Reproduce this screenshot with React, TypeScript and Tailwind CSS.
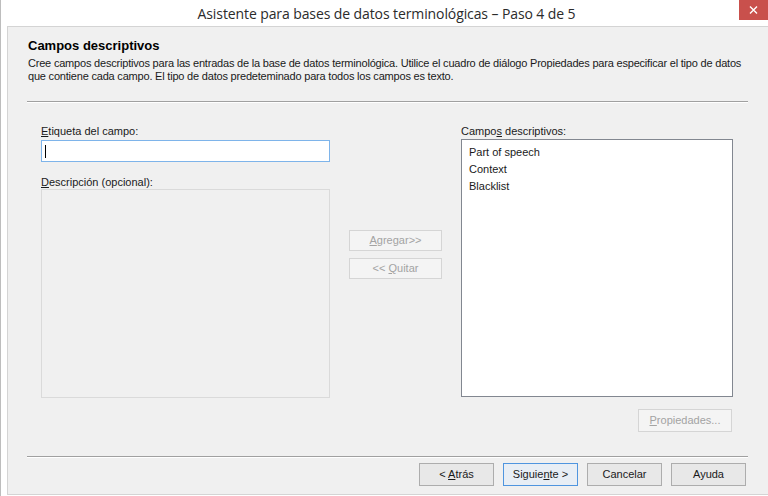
import React from 'react';

const ui = { fontFamily: '"Liberation Sans", Arial, sans-serif' };

function Btn({
  children,
  w = 'w-[75px]',
  h = 'h-[23px]',
  disabled = false,
  primary = false,
}: {
  children: React.ReactNode;
  w?: string;
  h?: string;
  disabled?: boolean;
  primary?: boolean;
}) {
  const tone = disabled
    ? 'border-[#d5d5d5] bg-[#f4f4f4] text-[#a3a3a3]'
    : primary
      ? 'border-[#4f95df] bg-[#e8eef5] text-[#1a1a1a]'
      : 'border-[#adadad] bg-[#e8e8e8] text-[#1a1a1a]';
  return (
    <div className={`${w} ${h} border flex items-center justify-center text-[11px] ${tone}`}>
      {children}
    </div>
  );
}

export default function App() {
  return (
    <div className="w-[768px] h-[496px] bg-white flex flex-col border-l border-[#bdbdbd] overflow-hidden" style={ui}>
      {/* title bar */}
      <div className="relative h-[26px] shrink-0 flex items-center justify-center">
        <span className="text-[14px] tracking-[-0.1px] text-[#2b2b2b] pl-[4px]" style={{ fontFamily: '"Open Sans", "Noto Sans", sans-serif' }}>
          Asistente para bases de datos terminológicas – Paso 4 de 5
        </span>
        <div className="absolute right-0 top-0 w-[29px] h-[20px] bg-[#c9504c] flex items-center justify-center">
          <svg width="9" height="8" viewBox="0 0 9 8">
            <path d="M1 0.5 L8 7.5 M8 0.5 L1 7.5" stroke="white" strokeWidth="1.4" />
          </svg>
        </div>
      </div>

      {/* client area */}
      <div className="flex-1 ml-[6px] mb-[1px] border-t border-l border-b border-[#d4d4d4] bg-[#f0f0f0] flex flex-col text-[#1a1a1a]">
        {/* header */}
        <div className="pl-[20px] pt-[11px]">
          <div className="text-[13px] font-bold leading-[16px] text-black">Campos descriptivos</div>
          <div className="mt-[3px] text-[11px] leading-[13px] tracking-[-0.2px]">
            Cree campos descriptivos para las entradas de la base de datos terminológica. Utilice el cuadro de diálogo Propiedades para especificar el tipo de datos
            <br />
            que contiene cada campo. El tipo de datos predeteminado para todos los campos es texto.
          </div>
        </div>
        <div className="ml-[19px] w-[721px] mt-[18px] border-t border-[#a0a0a0] border-b border-b-white" />

        {/* main */}
        <div className="flex h-[353px]">
          {/* left */}
          <div className="ml-[33px] w-[289px] flex flex-col">
            <div className="mt-[22px] text-[11px] leading-[13px]">
              <span className="underline">E</span>tiqueta del campo:
            </div>
            <div className="mt-[2px] h-[22px] bg-white border border-[#7eb4ea] flex items-center pl-[3px]">
              <span className="w-px h-[13px] bg-black" />
            </div>
            <div className="mt-[14px] text-[11px] leading-[13px]">
              <span className="underline">D</span>escripción (opcional):
            </div>
            <div className="h-[209px] border border-[#dadada] bg-[#f0f0f0]" />
          </div>

          {/* middle */}
          <div className="ml-[19px] w-[93px] flex flex-col gap-[7px] pt-[127px]">
            <Btn w="w-[93px]" h="h-[21px]" disabled>
              <span>
                <span className="underline">A</span>gregar&gt;&gt;
              </span>
            </Btn>
            <Btn w="w-[93px]" h="h-[21px]" disabled>
              <span>
                &lt;&lt; <span className="underline">Q</span>uitar
              </span>
            </Btn>
          </div>

          {/* right */}
          <div className="ml-[19px] w-[272px] flex flex-col">
            <div className="mt-[22px] text-[11px] leading-[13px]">
              Campo<span className="underline">s</span> descriptivos:
            </div>
            <div className="mt-[1px] h-[258px] bg-white border border-[#828790] pt-[4px] pl-[7px] text-[11px] leading-[17px]">
              <div>Part of speech</div>
              <div>Context</div>
              <div>Blacklist</div>
            </div>
            <div className="mt-[12px] flex justify-end pr-[1px]">
              <Btn w="w-[94px]" disabled>
                <span>
                  <span className="underline">P</span>ropiedades...
                </span>
              </Btn>
            </div>
          </div>
        </div>

        <div className="ml-[19px] w-[721px] border-t border-[#a0a0a0] border-b border-b-white" />
        <div className="ml-[19px] w-[721px] mt-[5px] flex justify-end gap-[9px] pr-[2px]">
          <Btn>
            <span>
              &lt; <span className="underline">A</span>trás
            </span>
          </Btn>
          <Btn primary>
            <span>
              Siguie<span className="underline">n</span>te &gt;
            </span>
          </Btn>
          <Btn>Cancelar</Btn>
          <Btn>Ayuda</Btn>
        </div>
      </div>
    </div>
  );
}
